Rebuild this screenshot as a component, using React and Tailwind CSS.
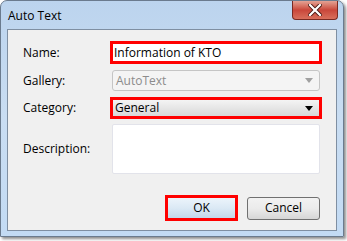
import React from 'react'

function Arrow({ color }) {
  return (
    <svg width="8" height="5" viewBox="0 0 8 5" className="shrink-0">
      <path d="M0 0 H8 L4 5 Z" fill={color} />
    </svg>
  )
}

export default function App() {
  return (
    <div className="w-[347px] h-[241px] bg-white overflow-hidden font-['Open_Sans',sans-serif] text-[12px] text-black">
      {/* Window frame */}
      <div className="w-[344px] h-[237px] rounded-t-[7px] border border-[#6b7b8e] bg-gradient-to-b from-[#bcd4ee] via-[#c9ddf2] to-[#c3dbf4] flex flex-col shadow-[2px_2px_3px_rgba(0,0,0,0.45)]">
        {/* Title bar */}
        <div className="h-[28px] flex items-start justify-between">
          <div className="pl-[7px] pt-[7px] leading-[16px] text-[12px]">Auto Text</div>
          <div className="mr-[5px] w-[46px] h-[19px] rounded-b-[4px] border border-t-0 border-[#7a2a22] bg-gradient-to-b from-[#e3a294] via-[#c9463a] to-[#d86f5c] flex items-center justify-center">
            <svg width="14" height="12" viewBox="0 0 14 12">
              <path d="M2 1 L12 11 M12 1 L2 11" stroke="#4a1a14" strokeWidth="4" strokeLinecap="square" />
              <path d="M2 1 L12 11 M12 1 L2 11" stroke="#ffffff" strokeWidth="2.2" strokeLinecap="square" />
            </svg>
          </div>
        </div>

        {/* Client area */}
        <div className="mx-[6px] mb-[5px] flex-1 border border-[#7f8fa2] bg-[#f0f0f0] flex flex-col pl-[15px] pr-[14px] pt-[11px]">
          {/* Name */}
          <div className="flex items-center h-[23px]">
            <div className="w-[87px]">Name:</div>
            <div className="flex-1 h-[23px] border-[3px] border-[#ff0000] bg-white flex items-center pl-[1px]">
              Information of KTO
            </div>
          </div>
          {/* Gallery */}
          <div className="flex items-center h-[21px] mt-[6px]">
            <div className="w-[89px]">Gallery:</div>
            <div className="flex-1 mr-[2px] h-[21px] rounded-[3px] border border-[#c5c5c5] bg-[#f4f4f4] flex items-center justify-between pl-[3px] pr-[6px] text-[#8c8c8c]">
              <span>AutoText</span>
              <Arrow color="#a0a0a0" />
            </div>
          </div>
          {/* Category */}
          <div className="flex items-center h-[22px] mt-[6px]">
            <div className="w-[87px]">Category:</div>
            <div className="flex-1 h-[22px] border-[3px] border-[#ff0000] bg-gradient-to-b from-[#f4f4f4] to-[#d8d8d8] flex items-center justify-between pl-[2px] pr-[6px]">
              <span>General</span>
              <Arrow color="#000000" />
            </div>
          </div>
          {/* Description */}
          <div className="flex items-center h-[50px] mt-[5px]">
            <div className="w-[89px]">Description:</div>
            <div className="flex-1 mr-[2px] h-[50px] rounded-[2px] border border-[#e2e3ea] bg-white" />
          </div>
          {/* Buttons */}
          <div className="flex justify-end items-center mt-[21px] gap-[9px] pr-[2px]">
            <div className="w-[73px] h-[26px] border-[3px] border-[#ff0000] bg-gradient-to-b from-[#ecf4fb] via-[#dbe9f5] to-[#c3d8ea] flex items-center justify-center">
              OK
            </div>
            <div className="w-[73px] h-[23px] rounded-[3px] border border-[#707070] bg-gradient-to-b from-[#f2f2f2] via-[#ebebeb] to-[#d6d6d6] flex items-center justify-center">
              Cancel
            </div>
          </div>
        </div>
      </div>
    </div>
  )
}
